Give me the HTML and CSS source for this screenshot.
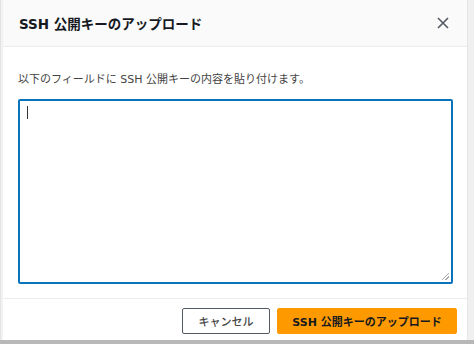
FILE: index.html
```html
<!DOCTYPE html>
<html lang="ja">
<head>
    <meta charset="UTF-8">
    <title>SSH 公開キーのアップロード</title>
    <link rel="stylesheet" href="styles.css">
</head>
<body>
    <div class="page">
        <div class="modal">
            <header class="modal-header">
                <h2 class="modal-title">SSH 公開キーのアップロード</h2>
                <button class="close-button" aria-label="閉じる">
                    <svg width="12" height="12" viewBox="0 0 12 12"><path d="M1 1L11 11M11 1L1 11" stroke="#545b64" stroke-width="1.6" fill="none"/></svg>
                </button>
            </header>
            <div class="modal-body">
                <p class="modal-text">以下のフィールドに SSH 公開キーの内容を貼り付けます。</p>
                <div class="key-field"><span class="caret"></span></div>
            </div>
            <footer class="modal-footer">
                <button class="btn btn-cancel">キャンセル</button>
                <button class="btn btn-primary">SSH 公開キーのアップロード</button>
            </footer>
        </div>
        <div class="side-strip"></div>
    </div>
    <div class="bottom-strip"></div>
</body>
</html>
```

FILE: styles.css
```css
/* 基本 */
body {
    margin: 0;
    font-family: "DejaVu Sans", "Noto Sans CJK JP", sans-serif;
    background-color: #f2f2f2;
    color: #16191f;
    width: 474px;
    height: 344px;
    overflow: hidden;
}
.page {
    display: flex;
    height: 340px;
    padding-left: 2px;
    border-left: 1px solid #e4e4e4;
}
.side-strip { flex: 1; background-color: #f0f0f0; border-left: 1px solid #e6e6e6; }
.bottom-strip { height: 4px; background-color: #b8b8b8; }

/* モーダル */
.modal {
    width: 464px;
    display: flex;
    flex-direction: column;
    background-color: #fff;
}
.modal-header {
    display: flex;
    align-items: center;
    justify-content: space-between;
    height: 46px;
    padding: 0 16px;
    background-color: #fafafa;
    border-bottom: 1px solid #eaeded;
}
.modal-title { margin: 0; font-size: 13.5px; font-weight: 700; }
.close-button { background: none; border: none; padding: 0; margin-right: 2px; cursor: pointer; display: flex; }

.modal-body { padding: 23px 14px 14px 15px; border-bottom: 1px solid #eaeded; }
.modal-text { margin: 0 0 13px 0; font-size: 11px; color: #444; }
.key-field {
    height: 171px;
    border: 2px solid #0a73bb;
    border-radius: 2px;
    padding: 5px 7px;
    position: relative;
}
.caret { display: block; width: 1px; height: 13px; background-color: #333; }
.key-field::after {
    content: "";
    position: absolute;
    right: 2px;
    bottom: 2px;
    width: 7px;
    height: 7px;
    background: linear-gradient(135deg, transparent 45%, #aaa 45%, #aaa 55%, transparent 55%, transparent 70%, #aaa 70%, #aaa 80%, transparent 80%);
}

.modal-footer {
    flex: 1;
    display: flex;
    justify-content: flex-end;
    align-items: center;
    gap: 7px;
    padding: 3px 10px 0 0;
}
.btn {
    height: 26px;
    font-family: inherit;
    font-size: 11px;
    border-radius: 2px;
    cursor: pointer;
}
.btn-cancel { width: 88px; background-color: #fff; border: 1px solid #545b64; color: #444; font-weight: 500; }
.btn-primary { width: 180px; background-color: #ff9900; border: 1px solid #ff9900; color: #16191f; font-weight: 700; }
```
